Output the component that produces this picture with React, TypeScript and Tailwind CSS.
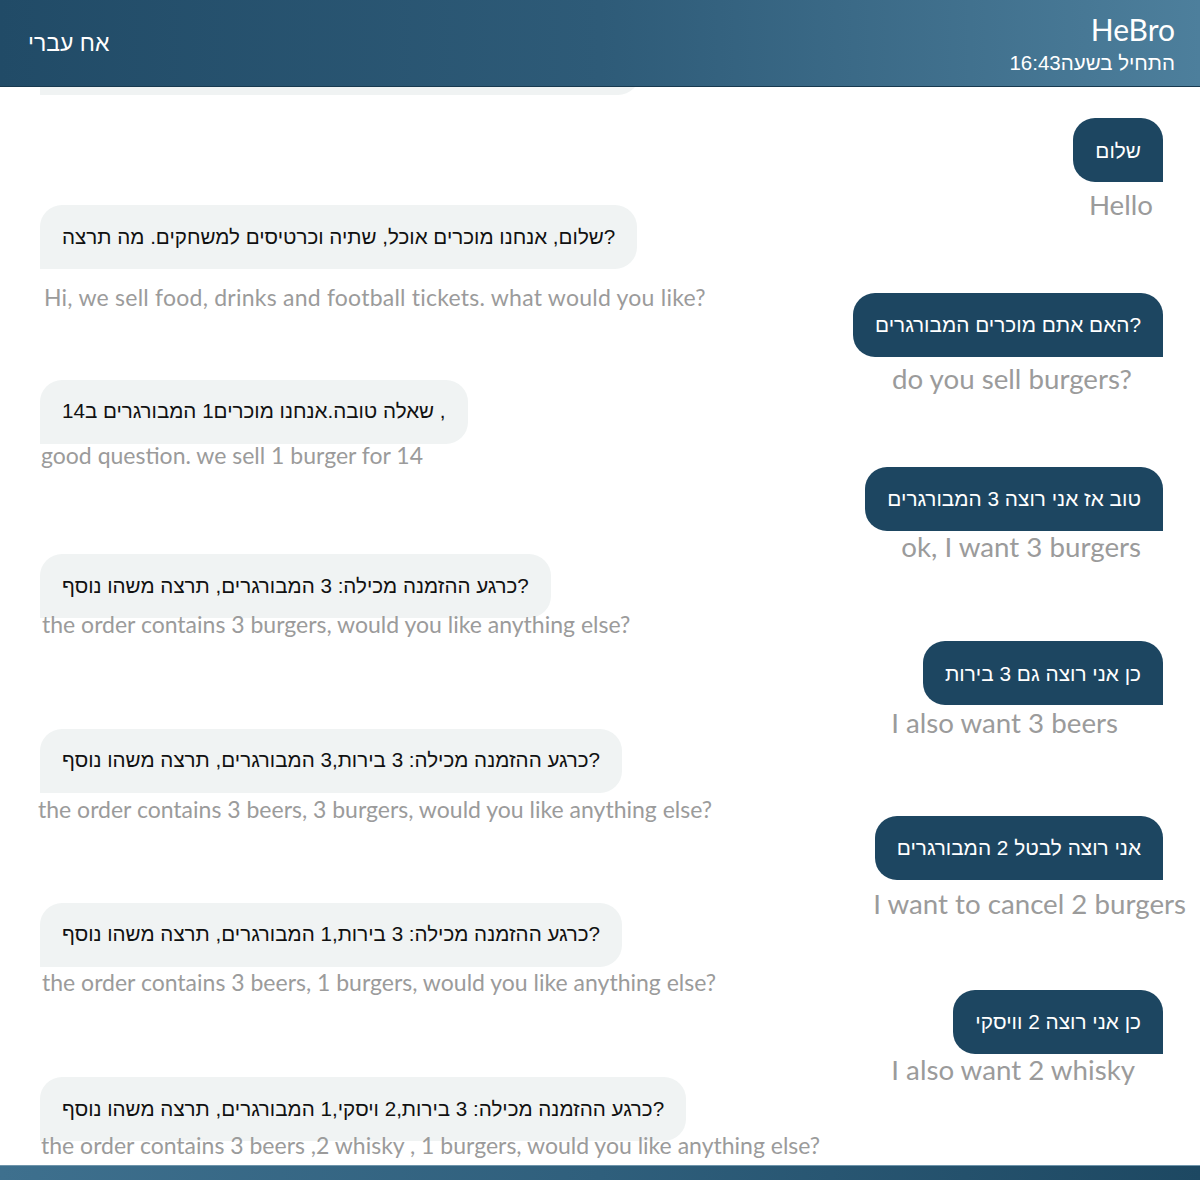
import React from 'react'

type Message = {
  from: 'bot' | 'user'
  he: string
  en?: string
  // spacing of the translation line under the bubble
  tr?: string
}

// the list is scrolled: the first bubble sits mostly under the header
const messages: Message[] = [
  { from: 'bot', he: '' },
  { from: 'user', he: 'שלום', en: 'Hello', tr: 'mt-[9px] mr-[10px]' },
  {
    from: 'bot',
    he: 'שלום, אנחנו מוכרים אוכל, שתיה וכרטיסים למשחקים. מה תרצה?',
    en: 'Hi, we sell food, drinks and football tickets. what would you like?',
    tr: 'mt-[17px] ml-[4px] tracking-[0.23px]',
  },
  { from: 'user', he: 'האם אתם מוכרים המבורגרים?', en: 'do you sell burgers?', tr: 'mt-[8px] mr-[31px]' },
  {
    from: 'bot',
    he: 'שאלה טובה.אנחנו מוכרים1 המבורגרים ב14 ,',
    en: 'good question. we sell 1 burger for 14',
    tr: 'mt-0 ml-[1px]',
  },
  { from: 'user', he: 'טוב אז אני רוצה 3 המבורגרים', en: 'ok, I want 3 burgers', tr: 'mt-[2px] mr-[22px]' },
  {
    from: 'bot',
    he: 'כרגע ההזמנה מכילה: 3 המבורגרים, תרצה משהו נוסף?',
    en: 'the order contains 3 burgers, would you like anything else?',
    tr: '-mt-[5px] ml-[2px]',
  },
  { from: 'user', he: 'כן אני רוצה גם 3 בירות', en: 'I also want 3 beers', tr: 'mt-[4px] mr-[45px]' },
  {
    from: 'bot',
    he: 'כרגע ההזמנה מכילה: 3 בירות,3 המבורגרים, תרצה משהו נוסף?',
    en: 'the order contains 3 beers, 3 burgers, would you like anything else?',
    tr: 'mt-[5px] -ml-[2px]',
  },
  { from: 'user', he: 'אני רוצה לבטל 2 המבורגרים', en: 'I want to cancel 2 burgers', tr: 'mt-[10px] -mr-[23px]' },
  {
    from: 'bot',
    he: 'כרגע ההזמנה מכילה: 3 בירות,1 המבורגרים, תרצה משהו נוסף?',
    en: 'the order contains 3 beers, 1 burgers, would you like anything else?',
    tr: 'mt-[4px] ml-[2px]',
  },
  { from: 'user', he: 'כן אני רוצה 2 וויסקי', en: 'I also want 2 whisky', tr: 'mt-[2px] mr-[28px]' },
  {
    from: 'bot',
    he: 'כרגע ההזמנה מכילה: 3 בירות,2 ויסקי,1 המבורגרים, תרצה משהו נוסף?',
    en: 'the order contains 3 beers ,2 whisky , 1 burgers, would you like anything else?',
    tr: '-mt-[7px] ml-[1px]',
  },
]

const heFont = "font-['Liberation_Sans','DejaVu_Sans',sans-serif]"
const enFont = "font-['Lato','Open_Sans',sans-serif]"

function Header() {
  return (
    <header className="relative z-10 h-[87px] shrink-0 flex items-center justify-between pl-7 pr-[25px] bg-gradient-to-r from-[#214b67] via-[#2e5b78] to-[#4d7f9c] border-b border-[#183a50] text-white">
      <span className={`${heFont} text-[23px]`}>אח עברי</span>
      <div className="flex flex-col items-end">
        <span className={`${enFont} text-[30px] leading-none mt-0.5`}>HeBro</span>
        <span className={`${heFont} text-[20.5px] leading-none mt-[9px]`}>התחיל בשעה16:43</span>
      </div>
    </header>
  )
}

function Row({ m }: { m: Message }) {
  const isUser = m.from === 'user'
  return (
    <div className={`h-[87.2px] shrink-0 flex flex-col ${isUser ? 'items-end pr-[37px]' : 'items-start pl-10'}`}>
      <div
        className={
          isUser
            ? `h-16 shrink-0 flex items-center px-[22px] rounded-[22px] rounded-br-none bg-[#1d4661] text-white text-[20.8px] ${heFont}`
            : `h-16 shrink-0 flex items-center px-[22px] rounded-[22px] rounded-bl-none bg-[#f0f3f3] text-[#111] text-[20.6px] ${heFont} ${m.he ? '' : 'w-[600px]'}`
        }
      >
        {m.he && <span className="whitespace-nowrap">{m.he}</span>}
      </div>
      {m.en && (
        <p
          className={`${enFont} ${m.tr} shrink-0 whitespace-nowrap leading-none text-[#9b9b9b] ${
            isUser ? 'text-[27.7px]' : 'text-[23px]'
          }`}
        >
          {m.en}
        </p>
      )}
    </div>
  )
}

export default function App() {
  return (
    <div className="w-[1200px] h-[1180px] flex flex-col bg-white overflow-hidden">
      <Header />
      <main className="h-[1078px] overflow-hidden">
        <div className="-mt-[56px] flex flex-col">
          {messages.map((m, i) => (
            <Row key={i} m={m} />
          ))}
        </div>
      </main>
      <footer className="h-[15px] shrink-0 bg-gradient-to-r from-[#3e708e] via-[#2f5f7c] to-[#1d4862] border-t border-[#6f95ab]" />
    </div>
  )
}
